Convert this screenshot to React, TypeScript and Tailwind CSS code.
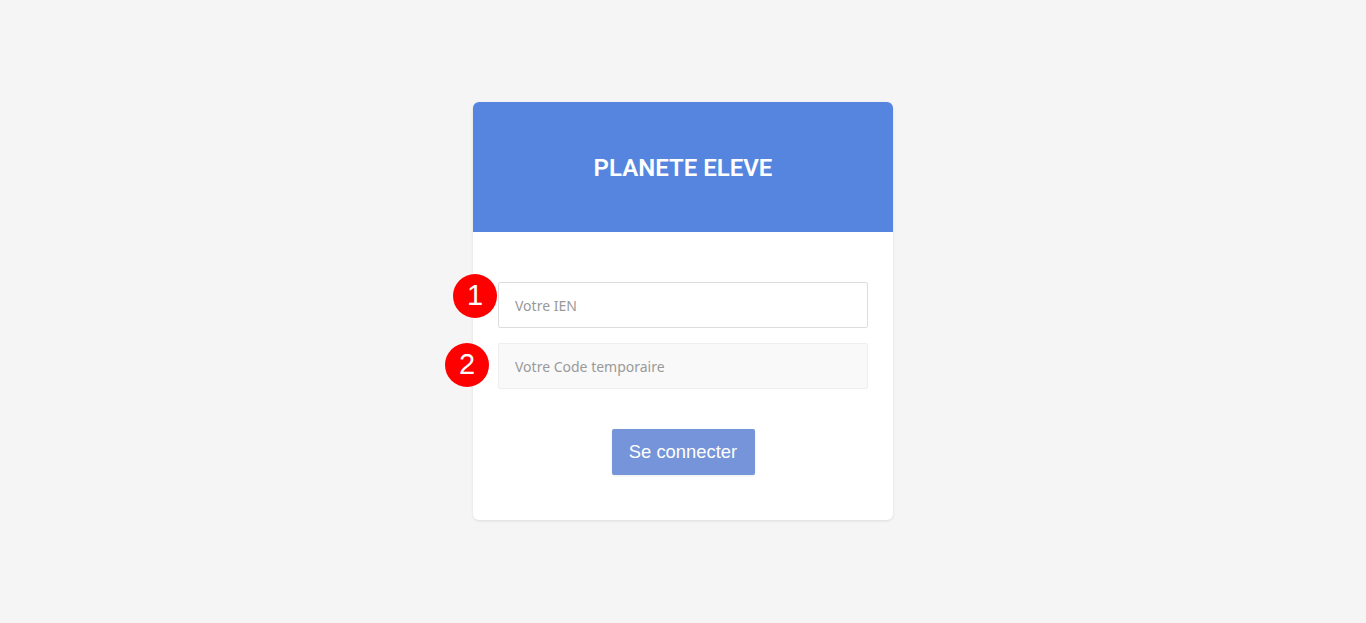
export default function App() {
  return (
    <div className="min-h-[623px] bg-[#f5f5f5] flex justify-center pt-[102px] font-['Noto_Sans',sans-serif] antialiased">
      <div className="w-[420px] h-[418px] bg-white rounded-[6px] shadow-[0_1px_3px_rgba(0,0,0,0.1)]">
        <div className="h-[130px] bg-[#5585df] rounded-t-[6px] flex items-center justify-center">
          <h1 className="text-white text-[24px] leading-none font-semibold font-['Roboto',sans-serif] mt-[2px]">PLANETE ELEVE</h1>
        </div>
        <form className="flex flex-col items-center pt-[50px] px-[25px]">
          <div className="relative w-full">
            <input
              type="text"
              placeholder="Votre IEN"
              className="w-full h-[46px] bg-white border border-[#dddddd] rounded-[2px] px-4 text-[14px] outline-none placeholder:text-[#999999]"
            />
            <span className="absolute left-[-45px] top-[-8px] w-[44px] h-[44px] pb-[2px] rounded-full bg-[#ff0000] text-white flex items-center justify-center text-[29px] leading-none font-['Liberation_Sans',sans-serif]">1</span>
          </div>
          <div className="relative w-full mt-[15px]">
            <input
              type="text"
              placeholder="Votre Code temporaire"
              className="w-full h-[46px] bg-[#f9f9f9] border border-[#eeeeee] rounded-[2px] px-4 text-[14px] outline-none placeholder:text-[#999999]"
            />
            <span className="absolute left-[-53px] top-0 w-[44px] h-[44px] pb-[2px] rounded-full bg-[#ff0000] text-white flex items-center justify-center text-[29px] leading-none font-['Liberation_Sans',sans-serif]">2</span>
          </div>
          <button
            type="button"
            className="mt-[40px] w-[143px] h-[46px] bg-[#7594d9] text-white text-[18.4px] leading-[46px] rounded-[2px] font-['Liberation_Sans',sans-serif] shadow-[0_1px_3px_rgba(0,0,0,0.08)]"
          >
            Se connecter
          </button>
        </form>
      </div>
    </div>
  );
}
